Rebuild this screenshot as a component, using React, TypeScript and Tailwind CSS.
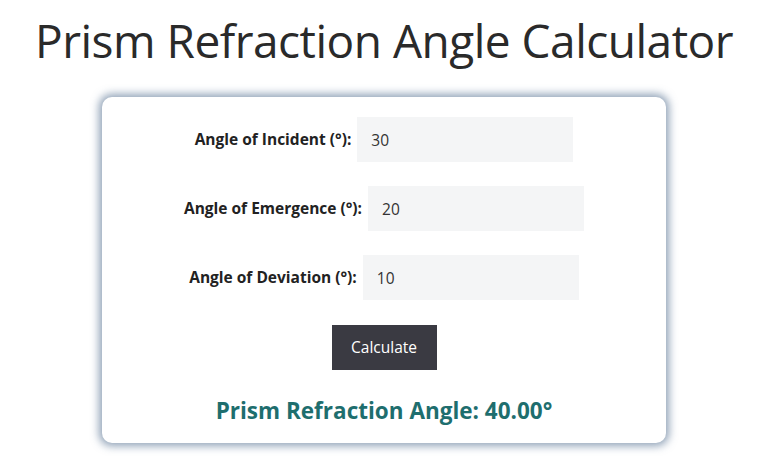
import { useState } from 'react';

const fields = [
  { id: 'incident', label: 'Angle of Incident (°):', value: '30' },
  { id: 'emergence', label: 'Angle of Emergence (°):', value: '20' },
  { id: 'deviation', label: 'Angle of Deviation (°):', value: '10' },
];

export default function App() {
  const [values, setValues] = useState<Record<string, string>>({
    incident: '30',
    emergence: '20',
    deviation: '10',
  });
  const [result, setResult] = useState<number>(40);

  const calculate = () => {
    const i = parseFloat(values.incident) || 0;
    const e = parseFloat(values.emergence) || 0;
    const d = parseFloat(values.deviation) || 0;
    setResult(i + e - d);
  };

  return (
    <div className="min-h-screen bg-white flex flex-col items-center font-['Open_Sans',sans-serif] text-[#212121]">
      {/* Title */}
      <h1 className="mt-[10px] text-[46px] leading-[60px] text-[#2a2a2a] tracking-[-0.5px]">
        Prism Refraction Angle Calculator
      </h1>

      {/* Card */}
      <div className="mt-[27px] w-[564px] h-[346px] bg-white rounded-[10px] shadow-[0_0_8px_3px_rgba(70,100,135,0.6)] flex flex-col items-center pt-[20px]">
        <div className="flex flex-col gap-[24px]">
          {fields.map((f) => (
            <div key={f.id} className="flex items-center justify-center gap-[6px]">
              <label className="text-[15.5px] font-bold text-[#222]">{f.label}</label>
              <input
                value={values[f.id]}
                onChange={(ev) => setValues({ ...values, [f.id]: ev.target.value })}
                className="w-[216px] h-[45px] bg-[#f4f5f6] px-[14px] text-[15.5px] text-[#333] outline-none"
              />
            </div>
          ))}
        </div>

        <button
          onClick={calculate}
          className="mt-[25px] w-[105px] h-[45px] bg-[#3a3a42] text-white text-[15.5px]"
        >
          Calculate
        </button>

        <div className="mt-[24px] text-[22.5px] font-bold text-[#1e6e6e]">
          Prism Refraction Angle: {result.toFixed(2)}°
        </div>
      </div>
    </div>
  );
}
